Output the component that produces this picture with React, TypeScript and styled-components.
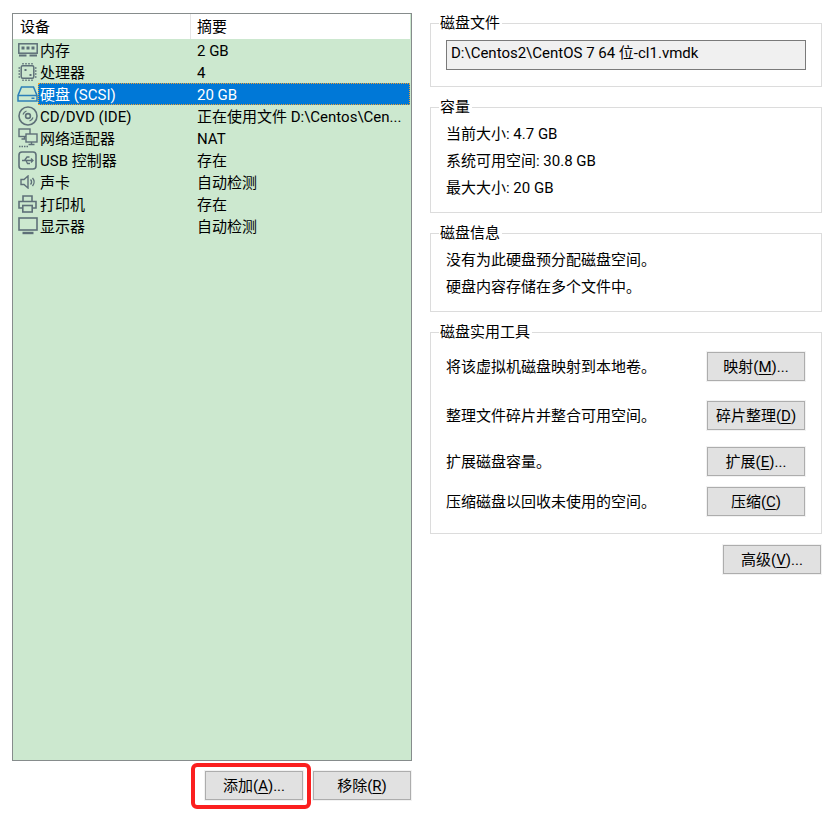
import * as React from "react";
import styled, { createGlobalStyle } from "styled-components";

const GlobalStyle = createGlobalStyle`
    html, body {
        margin: 0;
        padding: 0;
        background: #ffffff;
    }
    body {
        font-family: "Roboto", "Noto Sans CJK SC", sans-serif;
        font-size: 15px;
        color: #000000;
    }
`

const Page = styled.div`
    display: flex;
    width: 834px;
    height: 814px;
    box-sizing: border-box;
    padding: 13px 12px 0 12px;
    gap: 18px;
`

const LeftColumn = styled.div`
    display: flex;
    flex-direction: column;
    width: 400px;
`

const DeviceList = styled.div`
    box-sizing: border-box;
    height: 748px;
    border: 1px solid #868c8c;
    background: #cce8cf;
    padding-right: 1px;
`

const ListHeader = styled.div`
    display: flex;
    height: 25px;
    background: #ffffff;
    line-height: 27px;
`

const HeaderCell = styled.div<{ $width?: number }>`
    box-sizing: border-box;
    width: ${(p) => (p.$width ? `${p.$width}px` : "auto")};
    flex: ${(p) => (p.$width ? "none" : 1)};
    padding-left: ${(p) => (p.$width ? 7 : 6)}px;
    border-right: ${(p) => (p.$width ? "1px solid #e5e5e5" : "none")};
`

const Row = styled.div`
    display: flex;
    height: 22px;
    line-height: 24px;
`

const IconSlot = styled.div`
    display: flex;
    align-items: center;
    justify-content: center;
    width: 25px;
    padding-left: 4px;
    box-sizing: border-box;
    flex: none;
`

const RowBody = styled.div<{ $selected?: boolean }>`
    display: flex;
    flex: 1;
    min-width: 0;
    box-sizing: border-box;
    background: ${(p) => (p.$selected ? "#0078d7" : "transparent")};
    color: ${(p) => (p.$selected ? "#ffffff" : "#000000")};
    outline: ${(p) => (p.$selected ? "1px dotted #f0a030" : "none")};
    outline-offset: -1px;
`

const NameCell = styled.div`
    box-sizing: border-box;
    width: 152px;
    padding-left: 2px;
    flex: none;
    white-space: nowrap;
`

const SummaryCell = styled.div`
    box-sizing: border-box;
    flex: 1;
    min-width: 0;
    padding-left: 7px;
    white-space: nowrap;
`

const Button = styled.button`
    box-sizing: border-box;
    width: 98px;
    height: 29px;
    padding: 0;
    border: 1px solid #adadad;
    background: #e1e1e1;
    box-shadow: 0 0 0 1px #f2f2f2;
    font: inherit;
    line-height: 26px;
    color: #000000;
    white-space: nowrap;

    u {
        text-underline-offset: 2px;
    }
`

const ListActions = styled.div`
    display: flex;
    justify-content: flex-end;
    gap: 10px;
    margin-top: 10px;
    padding-right: 1px;
`

const Highlighted = styled.div`
    position: relative;
    display: flex;
`

const RedCallout = styled.div`
    position: absolute;
    top: -8px;
    right: -8px;
    bottom: -9px;
    left: -14px;
    border: 4px solid #fb1f1f;
    border-radius: 6px;
    pointer-events: none;
`

const RightColumn = styled.div`
    display: flex;
    flex-direction: column;
    width: 392px;
`

const Group = styled.fieldset`
    box-sizing: border-box;
    margin: 0;
    min-width: 0;
    padding: 0 16px 0 15px;
    border: 1px solid #dcdcdc;
    & + & {
        margin-top: 10px;
    }
`

const GroupTitle = styled.legend`
    margin-left: -7px;
    padding: 0 2px 0 1px;
    line-height: 20px;
    height: 20px;
`

const FileBox = styled.div`
    box-sizing: border-box;
    height: 30px;
    margin: 7px -1px 16px 0;
    padding-left: 4px;
    border: 1px solid #7a7a7a;
    background: #f0f0f0;
    line-height: 24px;
`

const InfoLines = styled.div`
    display: flex;
    flex-direction: column;
    gap: 7px;
    padding: 7px 0 14px;
`

const InfoLine = styled.div`
    height: 20px;
    line-height: 20px;
`

const ToolList = styled.div`
    display: flex;
    flex-direction: column;
    padding: 0 0 17px;
`

const ToolRow = styled.div<{ $top: number }>`
    display: flex;
    align-items: center;
    justify-content: space-between;
    margin-top: ${(p) => p.$top}px;
`

const ToolLabel = styled.span`
    padding-bottom: 3px;
`

const AdvancedRow = styled.div`
    display: flex;
    justify-content: flex-end;
    margin-top: 11px;
    padding-right: 1px;
`

const Svg = styled.svg<{ $color?: string; $weight?: number }>`
    display: block;
    fill: none;
    stroke: ${(p) => p.$color || "#5e7078"};
    stroke-width: ${(p) => p.$weight || 1.3};
`

const MemoryIcon = () => (
    <Svg width="20" height="14" viewBox="0 0 20 14" $weight={1.5}>
        <rect x="0.8" y="0.8" width="18.4" height="9.4" />
        <path d="M3.5 3.5h3v3h-3zM8.5 3.5h3v3h-3zM13.5 3.5h3v3h-3z" fill="#5e7078" stroke="none" />
        <path d="M1 12.6h7.5M11.5 12.6H19" strokeWidth="2" />
    </Svg>
)

const CpuIcon = () => (
    <Svg width="19" height="20" viewBox="0 0 19 20" $weight={1.5}>
        <rect x="3.2" y="3.7" width="12.6" height="12.6" rx="1.5" />
        <path d="M6.5 7h2v2h-2zM11.5 12h2v2h-2z" fill="#5e7078" stroke="none" />
        <path d="M5 1v1.5M8 1v1.5M11 1v1.5M14 1v1.5M5 17.5V19M8 17.5V19M11 17.5V19M14 17.5V19M0.5 6H2M0.5 9H2M0.5 12H2M0.5 15H2M17 6h1.5M17 9h1.5M17 12h1.5M17 15h1.5" />
    </Svg>
)

const DiskIcon = () => (
    <Svg width="21" height="16" viewBox="0 0 21 16" $color="#2c7fb8" $weight={1.5}>
        <path d="M4.5 1h12l3.5 8.5V15H1V9.5z" />
        <path d="M1 9.5h19M14.5 12.3h3" />
    </Svg>
)

const CdIcon = () => (
    <Svg width="20" height="20" viewBox="0 0 20 20">
        <circle cx="10" cy="10" r="9" strokeWidth="1.6" />
        <circle cx="10" cy="10" r="2.4" strokeWidth="1.6" />
        <path d="M5 8.5a5.5 5.5 0 0 1 3.5-3.5M15 11.5a5.5 5.5 0 0 1-3.5 3.5" />
    </Svg>
)

const NetworkIcon = () => (
    <Svg width="20" height="20" viewBox="0 0 20 20" $weight={1.4}>
        <rect x="1" y="1" width="11" height="7.5" />
        <path d="M6.5 8.5v2.5M3.5 11h4" />
        <rect x="8" y="6" width="11" height="8" fill="#cce8cf" />
        <path d="M13.5 14v2.5M10.5 16.5h6" />
        <path d="M1 18.5h9.5" strokeDasharray="1.5 1" />
    </Svg>
)

const UsbIcon = () => (
    <Svg width="19" height="19" viewBox="0 0 19 19">
        <rect x="1" y="1" width="17" height="17" rx="3" strokeWidth="1.6" />
        <path d="M4 9.5h11M13 7.5l2 2-2 2M6.5 9.5l2.5-3.5h2.5M8 9.5l1.5 3h2.5" />
    </Svg>
)

const SoundIcon = () => (
    <Svg width="16" height="14" viewBox="0 0 16 14" $weight={1.4}>
        <path d="M1 4.5h3L8 1v12L4 9.5H1z" />
        <path d="M10.5 4.5a3.5 3.5 0 0 1 0 5M12.5 3a6 6 0 0 1 0 8" />
    </Svg>
)

const PrinterIcon = () => (
    <Svg width="19" height="18" viewBox="0 0 19 18" $weight={1.6}>
        <path d="M5 6V1h9v5M4.5 13H1V6.5h17V13h-3.5" />
        <rect x="4.8" y="10.5" width="9.4" height="6.5" />
    </Svg>
)

const DisplayIcon = () => (
    <Svg width="20" height="18" viewBox="0 0 20 18" $weight={1.6}>
        <rect x="1" y="1" width="18" height="12" />
        <path d="M4.5 16h11" strokeWidth="2.4" />
    </Svg>
)

const devices = [
    { icon: <MemoryIcon />, name: "内存", summary: "2 GB" },
    { icon: <CpuIcon />, name: "处理器", summary: "4" },
    { icon: <DiskIcon />, name: "硬盘 (SCSI)", summary: "20 GB", selected: true },
    { icon: <CdIcon />, name: "CD/DVD (IDE)", summary: "正在使用文件 D:\\Centos\\Cen..." },
    { icon: <NetworkIcon />, name: "网络适配器", summary: "NAT" },
    { icon: <UsbIcon />, name: "USB 控制器", summary: "存在" },
    { icon: <SoundIcon />, name: "声卡", summary: "自动检测" },
    { icon: <PrinterIcon />, name: "打印机", summary: "存在" },
    { icon: <DisplayIcon />, name: "显示器", summary: "自动检测" },
]

export default function App() {
    return (
        <Page>
            <GlobalStyle />
            <LeftColumn>
                <DeviceList>
                    <ListHeader>
                        <HeaderCell $width={178}>设备</HeaderCell>
                        <HeaderCell>摘要</HeaderCell>
                    </ListHeader>
                    {devices.map((device) => (
                        <Row key={device.name}>
                            <IconSlot>{device.icon}</IconSlot>
                            <RowBody $selected={device.selected}>
                                <NameCell>{device.name}</NameCell>
                                <SummaryCell>{device.summary}</SummaryCell>
                            </RowBody>
                        </Row>
                    ))}
                </DeviceList>
                <ListActions>
                    <Highlighted>
                        <Button>
                            添加(<u>A</u>)...
                        </Button>
                        <RedCallout />
                    </Highlighted>
                    <Button>
                        移除(<u>R</u>)
                    </Button>
                </ListActions>
            </LeftColumn>
            <RightColumn>
                <Group>
                    <GroupTitle>磁盘文件</GroupTitle>
                    <FileBox>D:\Centos2\CentOS 7 64 位-cl1.vmdk</FileBox>
                </Group>
                <Group>
                    <GroupTitle>容量</GroupTitle>
                    <InfoLines>
                        <InfoLine>当前大小: 4.7 GB</InfoLine>
                        <InfoLine>系统可用空间: 30.8 GB</InfoLine>
                        <InfoLine>最大大小: 20 GB</InfoLine>
                    </InfoLines>
                </Group>
                <Group>
                    <GroupTitle>磁盘信息</GroupTitle>
                    <InfoLines>
                        <InfoLine>没有为此硬盘预分配磁盘空间。</InfoLine>
                        <InfoLine>硬盘内容存储在多个文件中。</InfoLine>
                    </InfoLines>
                </Group>
                <Group>
                    <GroupTitle>磁盘实用工具</GroupTitle>
                    <ToolList>
                        <ToolRow $top={10}>
                            <ToolLabel>将该虚拟机磁盘映射到本地卷。</ToolLabel>
                            <Button>
                                映射(<u>M</u>)...
                            </Button>
                        </ToolRow>
                        <ToolRow $top={20}>
                            <ToolLabel>整理文件碎片并整合可用空间。</ToolLabel>
                            <Button>
                                碎片整理(<u>D</u>)
                            </Button>
                        </ToolRow>
                        <ToolRow $top={17}>
                            <ToolLabel>扩展磁盘容量。</ToolLabel>
                            <Button>
                                扩展(<u>E</u>)...
                            </Button>
                        </ToolRow>
                        <ToolRow $top={11}>
                            <ToolLabel>压缩磁盘以回收未使用的空间。</ToolLabel>
                            <Button>
                                压缩(<u>C</u>)
                            </Button>
                        </ToolRow>
                    </ToolList>
                </Group>
                <AdvancedRow>
                    <Button>
                        高级(<u>V</u>)...
                    </Button>
                </AdvancedRow>
            </RightColumn>
        </Page>
    )
}
